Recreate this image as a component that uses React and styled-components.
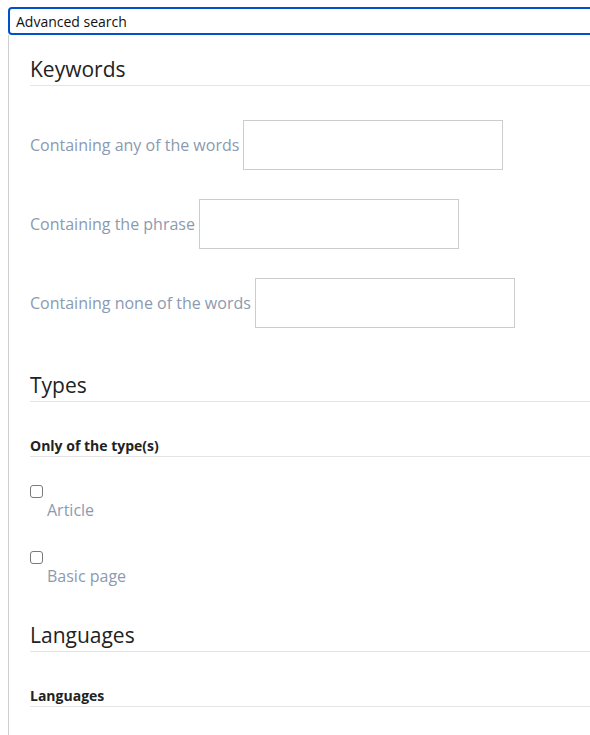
import React from 'react';
import styled, { createGlobalStyle } from 'styled-components';

const GlobalStyle = createGlobalStyle`
  html, body {
    margin: 0;
    overflow: hidden;
    background: #fff;
  }
  body {
    font-family: "Open Sans", "Noto Sans", sans-serif;
    color: #222;
  }
`;

const Page = styled.div`
  padding: 7px 0 0 8px;
  width: 620px;
`;

const Details = styled.details`
  margin: 0;
`;

const Summary = styled.summary`
  display: flex;
  align-items: center;
  height: 24px;
  padding-left: 6px;
  border: 2px solid #0052cc;
  border-radius: 4px;
  font-size: 14px;
  color: #111;
  list-style: none;
  cursor: pointer;
  &::-webkit-details-marker {
    display: none;
  }
`;

const Body = styled.div`
  border-left: 1px solid #cfcfcf;
  padding: 21px 0 40px 21px;
`;

const SectionTitle = styled.h2`
  margin: ${({ $gap }) => $gap}px 0 0;
  padding-bottom: 3px;
  border-bottom: 1px solid #e4e4e4;
  font-size: 21px;
  line-height: 26px;
  font-weight: 400;
  color: #222;
`;

const GroupTitle = styled.h3`
  margin: 35px 0 0;
  padding-bottom: 1px;
  border-bottom: 1px solid #e4e4e4;
  font-size: 14px;
  line-height: 18px;
  font-weight: 700;
  color: #222;
`;

const FieldList = styled.div`
  display: flex;
  flex-direction: column;
  gap: 29px;
  margin-top: 34px;
`;

const Field = styled.div`
  display: flex;
  align-items: center;
`;

const Label = styled.label`
  font-size: 16px;
  line-height: 22px;
  color: #8b9ab0;
`;

const TextInput = styled.input`
  box-sizing: border-box;
  width: 260px;
  height: 50px;
  margin-left: 4px;
  border: 1px solid #cccccc;
  border-radius: 0;
  background: #fff;
  font: inherit;
  font-size: 16px;
  outline: none;
`;

const Options = styled.div`
  display: flex;
  flex-direction: column;
  gap: 30px;
  margin-top: 28px;
`;

const Option = styled.div`
  display: flex;
  flex-direction: column;
  align-items: flex-start;
`;

const Checkbox = styled.input.attrs({ type: 'checkbox' })`
  appearance: none;
  box-sizing: border-box;
  width: 13px;
  height: 13px;
  margin: 0;
  border: 1px solid #7a7a7a;
  border-radius: 3px;
  background: #fff;
`;

const OptionLabel = styled.label`
  margin: 1px 0 0 17px;
  font-size: 16px;
  line-height: 22px;
  color: #8b9ab0;
`;

const keywordFields = [
  { id: 'or', label: 'Containing any of the words' },
  { id: 'phrase', label: 'Containing the phrase' },
  { id: 'negative', label: 'Containing none of the words' },
];

const types = [
  { id: 'article', label: 'Article' },
  { id: 'page', label: 'Basic page' },
];

export default function App() {
  return (
    <Page>
      <GlobalStyle />
      <Details open>
        <Summary>Advanced search</Summary>
        <Body>
          <SectionTitle $gap={0}>Keywords</SectionTitle>
          <FieldList>
            {keywordFields.map((f) => (
              <Field key={f.id}>
                <Label htmlFor={`edit-${f.id}`}>{f.label}</Label>
                <TextInput id={`edit-${f.id}`} type="text" />
              </Field>
            ))}
          </FieldList>

          <SectionTitle $gap={44}>Types</SectionTitle>
          <GroupTitle>Only of the type(s)</GroupTitle>
          <Options>
            {types.map((t) => (
              <Option key={t.id}>
                <Checkbox id={`edit-type-${t.id}`} />
                <OptionLabel htmlFor={`edit-type-${t.id}`}>{t.label}</OptionLabel>
              </Option>
            ))}
          </Options>

          <SectionTitle $gap={35}>Languages</SectionTitle>
          <GroupTitle>Languages</GroupTitle>
        </Body>
      </Details>
    </Page>
  );
}
